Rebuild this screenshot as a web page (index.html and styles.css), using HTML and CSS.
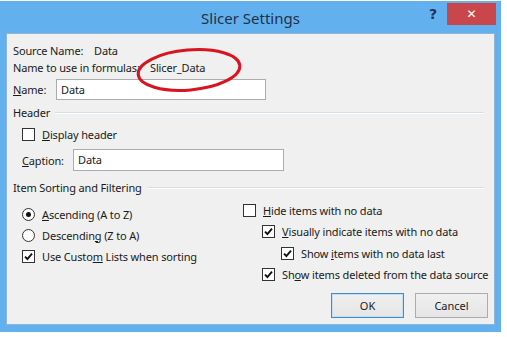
FILE: index.html
```html
<!DOCTYPE html>
<html lang="en">
<head>
    <meta charset="UTF-8">
    <title>Slicer Settings</title>
    <link rel="stylesheet" href="styles.css">
</head>
<body>
    <div class="window">
        <div class="titlebar">
            <div></div>
            <div class="title">Slicer Settings</div>
            <div class="controls">
                <span class="help">?</span>
                <span class="close">&#x2715;</span>
            </div>
        </div>
        <div class="client">
            <div class="info-row"><span class="lbl-source">Source Name:</span><span>Data</span></div>
            <div class="info-row"><span class="lbl-formula">Name to use in formulas:</span><span>Slicer_Data</span></div>
            <div class="field-row name-row">
                <label class="lbl-name"><u>N</u>ame:</label>
                <div class="textbox name-box">Data</div>
            </div>

            <div class="group-title">Header<span class="rule"></span></div>
            <div class="check-row indent-1">
                <span class="checkbox"></span>
                <span><u>D</u>isplay header</span>
            </div>
            <div class="field-row caption-row">
                <label class="lbl-caption"><u>C</u>aption:</label>
                <div class="textbox caption-box">Data</div>
            </div>

            <div class="group-title sort-title">Item Sorting and Filtering<span class="rule"></span></div>
            <div class="sort-section">
                <div class="col-left">
                    <div class="check-row">
                        <span class="radio checked"></span>
                        <span><u>A</u>scending (A to Z)</span>
                    </div>
                    <div class="check-row">
                        <span class="radio"></span>
                        <span>Descendin<u>g</u> (Z to A)</span>
                    </div>
                    <div class="check-row">
                        <span class="checkbox"><svg viewBox="0 0 11 11"><path d="M2 5.6 L4.4 8 L9 2.6"/></svg></span>
                        <span>Use Custo<u>m</u> Lists when sorting</span>
                    </div>
                </div>
                <div class="col-right">
                    <div class="check-row">
                        <span class="checkbox"></span>
                        <span><u>H</u>ide items with no data</span>
                    </div>
                    <div class="check-row indent-a">
                        <span class="checkbox"><svg viewBox="0 0 11 11"><path d="M2 5.6 L4.4 8 L9 2.6"/></svg></span>
                        <span><u>V</u>isually indicate items with no data</span>
                    </div>
                    <div class="check-row indent-b">
                        <span class="checkbox"><svg viewBox="0 0 11 11"><path d="M2 5.6 L4.4 8 L9 2.6"/></svg></span>
                        <span>Show <u>i</u>tems with no data last</span>
                    </div>
                    <div class="check-row indent-a">
                        <span class="checkbox"><svg viewBox="0 0 11 11"><path d="M2 5.6 L4.4 8 L9 2.6"/></svg></span>
                        <span>Sh<u>o</u>w items deleted from the data source</span>
                    </div>
                </div>
            </div>
            <div class="buttons">
                <button class="btn default">OK</button>
                <button class="btn">Cancel</button>
            </div>

            <!-- red hand-drawn mark around the formula name -->
            <svg class="mark" viewBox="0 0 110 48">
                <ellipse cx="55" cy="24" rx="51" ry="20" transform="rotate(-5 55 24)"/>
            </svg>
        </div>
    </div>
</body>
</html>
```

FILE: styles.css
```css
body {
    margin: 0;
    background: #ffffff;
    font-family: "Noto Sans", "Open Sans", sans-serif;
    font-size: 11px;
    color: #1a1a1a;
}
.window {
    width: 501px;
    height: 331px;
    margin-top: 1px;
    background: #62b1ee;
    box-sizing: border-box;
    padding: 0 6px 7px 6px;
}
.titlebar {
    height: 32px;
    display: grid;
    grid-template-columns: 1fr auto 1fr;
    margin: 0 -6px;
}
.title {
    line-height: 34px;
    font-size: 15px;
    color: #1f3149;
}
.controls {
    display: flex;
    justify-content: flex-end;
    align-items: flex-start;
    padding-top: 2px;
    padding-right: 5px;
}
.help {
    font-family: "DejaVu Sans", sans-serif;
    font-weight: bold;
    font-size: 14px;
    color: #1f3452;
    margin-top: 3px;
    margin-right: 10px;
}
.close {
    width: 49px;
    height: 22px;
    background: #c9474a;
    color: #ffffff;
    font-family: "DejaVu Sans", sans-serif;
    font-weight: bold;
    font-size: 12px;
    line-height: 22px;
    text-align: center;
}
.client {
    position: relative;
    height: 292px;
    box-sizing: border-box;
    background: #f0f0f0;
    border: 1px solid #8fb4d6;
    padding: 8px 6px 0 6px;
    white-space: nowrap;
    letter-spacing: -0.15px;
}
.info-row {
    display: flex;
    height: 17px;
    line-height: 17px;
}
.info-row span,
.field-row label,
.textbox {
    flex-shrink: 0;
}
.lbl-source {
    width: 81px;
}
.lbl-formula {
    width: 137px;
}
.field-row {
    display: flex;
    align-items: center;
}
.name-row {
    margin-top: 3px;
}
.lbl-name {
    width: 43px;
}
.textbox {
    background: #ffffff;
    border: 1px solid #acacac;
    box-sizing: border-box;
    padding-left: 4px;
}
.name-box {
    width: 210px;
    height: 21px;
    line-height: 19px;
}
.group-title {
    display: flex;
    align-items: center;
    height: 17px;
    margin-top: 4px;
}
.rule {
    flex: 1;
    height: 1px;
    background: #d5dfe5;
    border-bottom: 1px solid #ffffff;
    margin-left: 5px;
    margin-right: 4px;
}
.check-row {
    display: flex;
    align-items: center;
    height: 14px;
    gap: 7px;
}
.indent-1 {
    margin-top: 6px;
    padding-left: 9px;
}
.checkbox,
.radio {
    flex-shrink: 0;
    width: 13px;
    height: 13px;
    box-sizing: border-box;
    border: 1px solid #333333;
    background: #ffffff;
    display: flex;
    align-items: center;
    justify-content: center;
}
.checkbox svg {
    width: 11px;
    height: 11px;
}
.checkbox path {
    fill: none;
    stroke: #111111;
    stroke-width: 1.9;
}
.radio {
    border-radius: 50%;
}
.radio.checked::after {
    content: "";
    width: 5px;
    height: 5px;
    border-radius: 50%;
    background: #111111;
}
.caption-row {
    margin-top: 8px;
    padding-left: 9px;
}
.lbl-caption {
    width: 51px;
}
.caption-box {
    width: 211px;
    height: 22px;
    line-height: 20px;
}
.sort-title {
    margin-top: 8px;
}
.sort-section {
    display: flex;
    align-items: flex-start;
    margin-top: 7px;
    padding-left: 9px;
}
.col-left {
    flex-shrink: 0;
    width: 221px;
    padding-top: 4px;
    display: flex;
    flex-direction: column;
    gap: 7px;
}
.col-right {
    flex-shrink: 0;
    display: flex;
    flex-direction: column;
    gap: 7.5px;
}
.indent-a {
    padding-left: 19px;
}
.indent-b {
    padding-left: 38px;
}
.buttons {
    display: flex;
    justify-content: flex-end;
    gap: 11px;
    margin-top: 11.5px;
}
.btn {
    width: 73px;
    height: 25px;
    font-family: inherit;
    font-size: 11px;
    color: #1a1a1a;
    background: linear-gradient(#f0f0f0, #e5e5e5);
    border: 1px solid #acacac;
    padding: 0;
}
.btn.default {
    border: 1px solid #3c8cd0;
    box-shadow: inset 0 0 0 1px #c6def2;
}
.mark {
    position: absolute;
    left: 127px;
    top: 12px;
    width: 110px;
    height: 48px;
    overflow: visible;
}
.mark ellipse {
    fill: none;
    stroke: #d7141f;
    stroke-width: 3;
}
```
